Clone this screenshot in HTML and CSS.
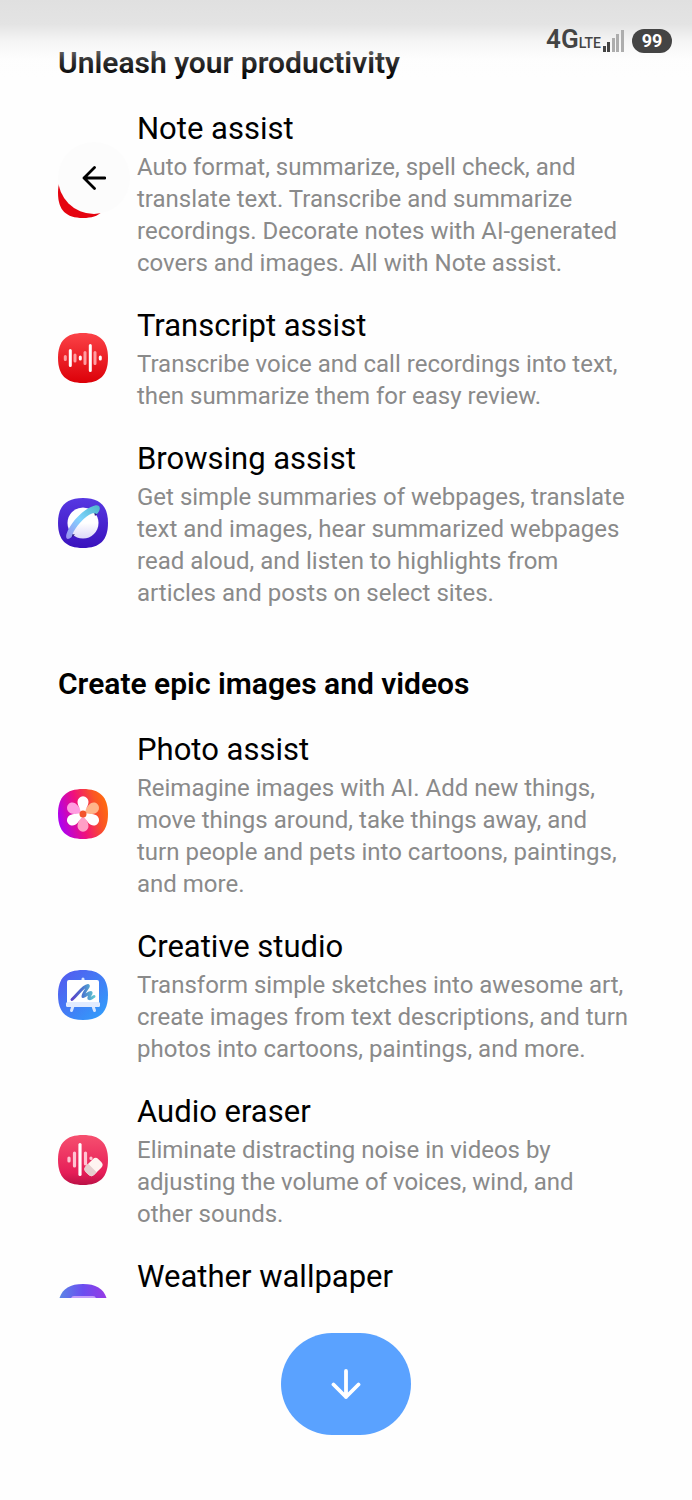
FILE: index.html
```html
<!DOCTYPE html>
<html lang="en">
<head>
    <meta charset="UTF-8">
    <meta name="viewport" content="width=device-width, initial-scale=1">
    <title>AI features</title>
    <link rel="stylesheet" href="styles.css">
</head>
<body>

<div class="screen">
    <header class="status-bar">
        <span class="network">4G<small>LTE</small></span>
        <svg class="signal" viewBox="0 0 21 22" width="21" height="22" aria-hidden="true">
            <path fill="#444" d="M0 16h3v6H0zM4 12h3v10H4z"/>
            <path fill="#adadad" d="M9 8h3v14H9zM13 4h3v18h-3zM18 0h3v22h-3z"/>
        </svg>
        <span class="battery">99</span>
    </header>

    <button class="back" type="button" aria-label="Back">
        <svg viewBox="0 0 24 24" width="24" height="24" fill="none" stroke="#000" stroke-width="2.8" stroke-linecap="round" stroke-linejoin="round">
            <path d="M23 12H2M12.5 1.5L2 12l10.5 10.5"/>
        </svg>
    </button>

    <main class="content">
        <section class="group">
            <h2>Unleash your productivity</h2>
            <ul>
                <li class="feature">
                    <svg class="icon" viewBox="0 0 50 50" aria-hidden="true">
                        <path fill="#e50410" d="M25 0C42 0 50 8 50 25S42 50 25 50 0 42 0 25 8 0 25 0z"/>
                    </svg>
                    <div class="text">
                        <h3>Note assist</h3>
                        <p>Auto format, summarize, spell check, and translate text. Transcribe and summarize recordings. Decorate notes with AI-generated covers and images. All with Note assist.</p>
                    </div>
                </li>
                <li class="feature">
                    <svg class="icon" viewBox="0 0 50 50" aria-hidden="true">
                        <linearGradient id="red" x1="0" y1="0" x2="0" y2="1">
                            <stop offset="0" stop-color="#fb4247"/>
                            <stop offset="1" stop-color="#dc0008"/>
                        </linearGradient>
                        <path fill="url(#red)" d="M25 0C42 0 50 8 50 25S42 50 25 50 0 42 0 25 8 0 25 0z"/>
                        <g fill="none" stroke-width="3" stroke-linecap="round">
                            <path stroke="#ff9da0" d="M7.3 23.5v3M17 22v6M27 19.5v11M37 19.5v11"/>
                            <path stroke="#fff" d="M12.3 17.5v15M22.3 24v2M32.3 12.500v25M42.3 24v2"/>
                        </g>
                    </svg>
                    <div class="text">
                        <h3>Transcript assist</h3>
                        <p>Transcribe voice and call recordings into text, then summarize them for easy review.</p>
                    </div>
                </li>
                <li class="feature">
                    <svg class="icon" viewBox="0 0 50 50" aria-hidden="true">
                        <linearGradient id="indigo" x1="0" y1="0" x2="0" y2="1">
                            <stop offset="0" stop-color="#5738e2"/>
                            <stop offset="1" stop-color="#3a12bd"/>
                        </linearGradient>
                        <linearGradient id="planet" x1="0" y1="0" x2="0" y2="1">
                            <stop offset=".5" stop-color="#fff"/>
                            <stop offset="1" stop-color="#dcd8f8"/>
                        </linearGradient>
                        <linearGradient id="ring" x1="0" y1="1" x2="1" y2="0">
                            <stop offset="0" stop-color="#9c8cf0"/>
                            <stop offset=".5" stop-color="#80d4ff"/>
                            <stop offset="1" stop-color="#4cb5c8"/>
                        </linearGradient>
                        <path fill="url(#indigo)" d="M25 0C42 0 50 8 50 25S42 50 25 50 0 42 0 25 8 0 25 0z"/>
                        <circle cx="25" cy="25" r="15.5" fill="url(#planet)"/>
                        <path fill="#2e1c7c" d="M36 14l4 1-3 3zM13 36l4 .5-3 2.5z"/>
                        <path fill="url(#ring)" d="M8.500 36C12 25 26 10 37 7.5c5-1 6.500 3 2.500 8-1 1.500-2 -1-5.500 0C27 18 17 29 14.5 36.500c-.5 2-1 3-3 4C8.5 42 7.500 39.500 8.500 36z"/>
                    </svg>
                    <div class="text">
                        <h3>Browsing assist</h3>
                        <p>Get simple summaries of webpages, translate text and images, hear summarized webpages read aloud, and listen to highlights from articles and posts on select sites.</p>
                    </div>
                </li>
            </ul>
        </section>

        <section class="group">
            <h2>Create epic images and videos</h2>
            <ul>
                <li class="feature">
                    <svg class="icon" viewBox="0 0 50 50" aria-hidden="true">
                        <linearGradient id="sunset" x1="0" y1=".7" x2="1" y2=".4">
                            <stop offset="0" stop-color="#a800fa"/>
                            <stop offset=".45" stop-color="#f0107c"/>
                            <stop offset=".8" stop-color="#fa5426"/>
                            <stop offset="1" stop-color="#ff6a10"/>
                        </linearGradient>
                        <path fill="url(#sunset)" d="M25 0C42 0 50 8 50 25S42 50 25 50 0 42 0 25 8 0 25 0z"/>
                        <defs>
                            <path id="petal" d="M23 25C23 20 19.500 17 19.500 12.800a5.500 5.500 0 0 1 11 0C30.500 17 27 20 27 25z"/>
                        </defs>
                        <use href="#petal" fill="#ffb58a" transform="rotate(60 25 25)"/>
                        <use href="#petal" fill="#ff9fc6" transform="rotate(180 25 25)"/>
                        <use href="#petal" fill="#ff9ce0" transform="rotate(300 25 25)"/>
                        <use href="#petal" fill="#fff"/>
                        <use href="#petal" fill="#fff" transform="rotate(120 25 25)"/>
                        <use href="#petal" fill="#fff" transform="rotate(240 25 25)"/>
                        <circle cx="25" cy="25" r="3.5" fill="#f2552c"/>
                    </svg>
                    <div class="text">
                        <h3>Photo assist</h3>
                        <p>Reimagine images with AI. Add new things, move things around, take things away, and turn people and pets into cartoons, paintings, and more.</p>
                    </div>
                </li>
                <li class="feature">
                    <svg class="icon" viewBox="0 0 50 50" aria-hidden="true">
                        <linearGradient id="blue" x1="0" y1="0" x2="1" y2="1">
                            <stop offset="0" stop-color="#5656ee"/>
                            <stop offset="1" stop-color="#2fa2fc"/>
                        </linearGradient>
                        <linearGradient id="scribble" x1="0" y1="0" x2="1" y2="0">
                            <stop offset="0" stop-color="#5a43c8"/>
                            <stop offset=".5" stop-color="#4a78cf"/>
                            <stop offset="1" stop-color="#5fc5d0"/>
                        </linearGradient>
                        <path fill="url(#blue)" d="M25 0C42 0 50 8 50 25S42 50 25 50 0 42 0 25 8 0 25 0z"/>
                        <path fill="none" stroke="#d8e6ff" stroke-width="3" stroke-linecap="round" d="M15 36l-1.5 4.5M35 36l1.5 4.5M25 9v3"/>
                        <rect x="9" y="10" width="32" height="25" rx="2" fill="#fff"/>
                        <rect x="8" y="32" width="34" height="5" rx="1.5" fill="#e1ebff"/>
                        <path fill="none" stroke="url(#scribble)" stroke-width="3" stroke-linecap="round" stroke-linejoin="round" d="M14 29.500C20 24 25 16 30 15.500c2 .5-5 7-5 11 3-.5 5-4 8-4 1 1-3 4-2 6 2 1 3-1 5-2"/>
                    </svg>
                    <div class="text">
                        <h3>Creative studio</h3>
                        <p>Transform simple sketches into awesome art, create images from text descriptions, and turn photos into cartoons, paintings, and more.</p>
                    </div>
                </li>
                <li class="feature">
                    <svg class="icon" viewBox="0 0 50 50" aria-hidden="true">
                        <linearGradient id="rose" x1="0" y1="0" x2="0" y2="1">
                            <stop offset="0" stop-color="#f6506f"/>
                            <stop offset=".75" stop-color="#e61e58"/>
                            <stop offset="1" stop-color="#bb1146"/>
                        </linearGradient>
                        <path fill="url(#rose)" d="M25 0C42 0 50 8 50 25S42 50 25 50 0 42 0 25 8 0 25 0z"/>
                        <g fill="none" stroke-width="3.2" stroke-linecap="round">
                            <path stroke="#ffc4d2" d="M11 23v3M16.500 18v13M27.500 18v11M33 23v.5"/>
                            <path stroke="#fff" d="M22 9.500v30"/>
                        </g>
                        <g transform="rotate(-45 35.500 32)">
                            <rect x="26.5" y="26" width="18" height="12" rx="4" fill="#fff4f1"/>
                            <path fill="#e6cfcf" d="M34 26h-3.500a4 4 0 0 0-4 4v4a4 4 0 0 0 4 4H34z"/>
                        </g>
                    </svg>
                    <div class="text">
                        <h3>Audio eraser</h3>
                        <p>Eliminate distracting noise in videos by adjusting the volume of voices, wind, and other sounds.</p>
                    </div>
                </li>
                <li class="feature">
                    <svg class="icon" viewBox="0 0 50 50" aria-hidden="true">
                        <linearGradient id="violet" x1="0" y1="0" x2="1" y2="0">
                            <stop offset="0" stop-color="#5a8ae6"/>
                            <stop offset=".5" stop-color="#6b4df0"/>
                            <stop offset="1" stop-color="#9a38e4"/>
                        </linearGradient>
                        <path fill="url(#violet)" d="M25 0C42 0 50 8 50 25S42 50 25 50 0 42 0 25 8 0 25 0z"/>
                        <rect x="13" y="12" width="25" height="27" rx="3" fill="#c49cfa"/>
                    </svg>
                    <div class="text">
                        <h3>Weather wallpaper</h3>
                    </div>
                </li>
            </ul>
        </section>
    </main>

    <footer class="footer">
        <button class="more" type="button" aria-label="Scroll down">
            <svg viewBox="0 0 30 30" width="30" height="30" fill="none" stroke="#fff" stroke-width="3.8" stroke-linecap="round" stroke-linejoin="round">
                <path d="M15 2v26M2.5 15.5L15 28l12.5-12.5"/>
            </svg>
        </button>
    </footer>
</div>

</body>
</html>
```

FILE: styles.css
```css
* {
    box-sizing: border-box;
}
body {
    margin: 0;
    font-family: Roboto, "Liberation Sans", sans-serif;
    background-color: #fefefe;
    color: #000;
}
h2, h3, p, ul {
    margin: 0;
    padding: 0;
}
button {
    display: flex;
    align-items: center;
    justify-content: center;
    padding: 0;
    border: none;
    cursor: pointer;
}
.screen {
    position: relative;
    display: flex;
    flex-direction: column;
    height: 100vh;
}

/* status bar fades out over the scrolled list */
.status-bar {
    position: absolute;
    top: 0;
    left: 0;
    right: 0;
    z-index: 2;
    display: flex;
    align-items: center;
    justify-content: flex-end;
    padding: 26px 20px 28px;
    background: linear-gradient(rgba(224,224,224,1) 0, rgba(226,226,226,0.95) 24px, rgba(240,240,240,0.6) 42px, rgba(252,252,252,0.2) 60px, rgba(255,255,255,0) 78px);
    color: #444;
}
.network {
    font-size: 26px;
    font-weight: 600;
    line-height: 26px;
    margin-right: 2px;
}
.network small {
    font-size: 14px;
    font-weight: 500;
}
.battery {
    margin-left: 8px;
    width: 40px;
    border-radius: 12px;
    background: #444;
    color: #fff;
    font-size: 18px;
    font-weight: 700;
    line-height: 24px;
    text-align: center;
}

.back {
    position: absolute;
    top: 142px;
    left: 58px;
    z-index: 1;
    width: 72px;
    height: 72px;
    border-radius: 50%;
    background: #fcfcfc;
}

.content {
    flex: 1;
    min-height: 0;
    overflow: hidden;
    padding: 43px 58px 0;
}
.group {
    margin-bottom: 55px;
}
.group h2 {
    font-size: 30px;
    font-weight: 600;
    line-height: 40px;
    margin-bottom: 24px;
}
.group ul {
    display: flex;
    flex-direction: column;
    gap: 25px;
    list-style: none;
}
.feature {
    display: flex;
    align-items: center;
    gap: 29px;
    min-height: 108px;
}
.icon {
    flex: none;
    width: 50px;
    height: 50px;
}
.text {
    flex: 1;
    align-self: flex-start;
}
.text h3 {
    font-size: 31px;
    font-weight: 400;
    line-height: 44px;
}
.text p {
    font-size: 24px;
    line-height: 32px;
    color: #8a8a8a;
}

.footer {
    display: flex;
    justify-content: center;
    padding: 35px 0 65px;
}
.more {
    width: 130px;
    height: 102px;
    border-radius: 51px;
    background: #5aa2ff;
}
```
